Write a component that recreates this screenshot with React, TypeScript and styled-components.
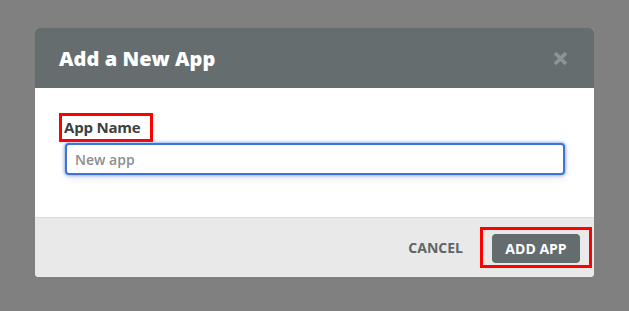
import React from "react";
import styled, { createGlobalStyle } from "styled-components";

const Global = createGlobalStyle`
  html, body { margin: 0; padding: 0; }
  body {
    background: #808080;
    font-family: "Open Sans", "Noto Sans", "Liberation Sans", sans-serif;
    -webkit-font-smoothing: antialiased;
  }
  * { box-sizing: border-box; }
`;

const Page = styled.div`
  height: 311px;
  padding: 28px 35px 0 35px;
  background: #808080;
`;

const Modal = styled.div`
  display: flex;
  flex-direction: column;
  border-radius: 4px;
  overflow: hidden;
  background: #ffffff;
`;

const Header = styled.div`
  height: 60px;
  display: flex;
  align-items: center;
  justify-content: space-between;
  padding: 0 26px 0 24px;
  background: #656d6e;
`;

const Title = styled.h2`
  margin: 0;
  font-size: 20px;
  font-weight: 800;
  color: #ffffff;
  letter-spacing: 0.05px;
`;

const CloseButton = styled.button`
  border: 0;
  background: transparent;
  padding: 0;
  width: 15px;
  height: 15px;
  display: flex;
  cursor: pointer;
`;

const Body = styled.div`
  height: 129px;
  padding: 25px 29px 0 30px;
  display: flex;
  flex-direction: column;
`;

const Highlight = styled.div<{ $pad: string }>`
  border: 3px solid #ff0000;
  padding: ${(p) => p.$pad};
`;

const LabelBox = styled(Highlight)`
  align-self: flex-start;
  margin-left: -6px;
`;

const Label = styled.label`
  display: block;
  font-size: 15px;
  line-height: 23px;
  font-weight: 700;
  color: #3c4142;
  letter-spacing: -0.2px;
`;

const Input = styled.input`
  margin-top: 1px;
  height: 32px;
  width: 100%;
  border: 2px solid #3f74d6;
  border-radius: 4px;
  padding: 0 8px;
  font-family: inherit;
  font-size: 14px;
  font-weight: 600;
  color: #333;
  outline: none;
  box-shadow: 0 0 3px 1px rgba(70, 125, 225, 0.55), 0 4px 8px rgba(0, 0, 0, 0.07);
  &::placeholder { color: #8a8f90; }
`;

const Footer = styled.div`
  height: 60px;
  background: #e9e9e9;
  border-top: 1px solid #dddddd;
  display: flex;
  align-items: center;
  justify-content: flex-end;
  padding: 0 2px 1px 0;
`;

const TextButton = styled.button`
  border: 0;
  background: transparent;
  padding: 0;
  margin-right: 17px;
  font-family: inherit;
  font-size: 14px;
  font-weight: 700;
  color: #5e6667;
  text-transform: uppercase;
  cursor: pointer;
`;

const PrimaryButton = styled.button`
  width: 88px;
  height: 29px;
  border: 0;
  border-radius: 4px;
  background: #646c6d;
  color: #ffffff;
  font-family: inherit;
  font-size: 14px;
  font-weight: 700;
  text-transform: uppercase;
  cursor: pointer;
`;

export default function App() {
  return (
    <>
      <Global />
      <Page>
        <Modal>
          <Header>
            <Title>Add a New App</Title>
            <CloseButton aria-label="Close">
              <svg width="15" height="15" viewBox="0 0 15 15">
                <path d="M2 2 L13 13 M13 2 L2 13" stroke="#8c9495" strokeWidth="3.6" />
              </svg>
            </CloseButton>
          </Header>
          <Body>
            <LabelBox $pad="0 10px 0 2px">
              <Label htmlFor="app-name">App Name</Label>
            </LabelBox>
            <Input id="app-name" placeholder="New app" />
          </Body>
          <Footer>
            <TextButton>Cancel</TextButton>
            <Highlight $pad="4px 9px 2px 9px">
              <PrimaryButton>Add App</PrimaryButton>
            </Highlight>
          </Footer>
        </Modal>
      </Page>
    </>
  );
}
